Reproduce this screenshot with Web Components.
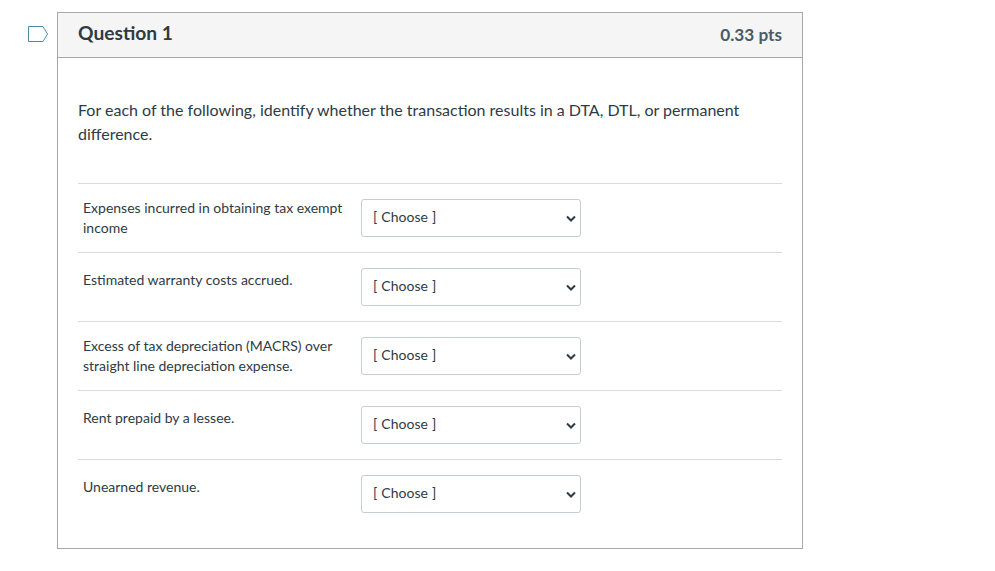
<!DOCTYPE html>
<html>
<head>
<meta charset="utf-8">
<style>
  html, body { margin: 0; background: #fff; }
  body { font-family: Lato, "Open Sans", sans-serif; color: #2d3b45; }
</style>
</head>
<body>
<quiz-question title-text="Question 1" points="0.33 pts">
  <span slot="text">For each of the following, identify whether the transaction results in a DTA, DTL, or permanent difference.</span>
  <match-row two-line>Expenses incurred in obtaining tax exempt income</match-row>
  <match-row>Estimated warranty costs accrued.</match-row>
  <match-row two-line>Excess of tax depreciation (MACRS) over straight line depreciation expense.</match-row>
  <match-row>Rent prepaid by a lessee.</match-row>
  <match-row>Unearned revenue.</match-row>
</quiz-question>

<script>
class QuizQuestion extends HTMLElement {
    constructor() {
        super();
        this.attachShadow({ mode: 'open' });
        this.shadowRoot.innerHTML = `
            <style>
                :host {
                    display: flex;
                    align-items: flex-start;
                    padding: 12px 0 0 28px;
                }
                .flag { display: block; width: 20px; height: 16px; margin: 14px 9px 0 0; flex: none; }
                .card {
                    width: 746px;
                    box-sizing: border-box;
                    border: 1px solid #a8a8a8;
                }
                header {
                    display: flex;
                    justify-content: space-between;
                    align-items: center;
                    box-sizing: border-box;
                    height: 45px;
                    padding: 0 20px;
                    background: #f5f5f5;
                    border-bottom: 1px solid #a8a8a8;
                    font-weight: bold;
                }
                h2 { margin: 0 0 5px; font-size: 19.2px; font-weight: bold; line-height: 24px; }
                .pts { font-size: 17.2px; color: #4b5b66; line-height: 24px; }
                .body { padding: 40px 20px 20px; }
                .text { font-size: 16px; line-height: 24px; margin-bottom: 37px; }
            </style>
            <svg class="flag" viewBox="0 0 20 16">
                <path d="M0.5 0.5H15L19.5 8L15 15.5H0.5Z" fill="#fff" stroke="#4a8aa8" stroke-width="1"/>
            </svg>
            <div class="card">
                <header><h2></h2><span class="pts"></span></header>
                <div class="body">
                    <div class="text"><slot name="text"></slot></div>
                    <slot></slot>
                </div>
            </div>
        `;
    }

    connectedCallback() {
        this.shadowRoot.querySelector('h2').textContent = this.getAttribute('title-text');
        this.shadowRoot.querySelector('.pts').textContent = this.getAttribute('points');
    }
}

class MatchRow extends HTMLElement {
    constructor() {
        super();
        this.attachShadow({ mode: 'open' });
        this.shadowRoot.innerHTML = `
            <style>
                :host {
                    display: flex;
                    align-items: flex-start;
                    height: 69px;
                    box-sizing: border-box;
                    border-top: 1px solid #d9dcde;
                    font-size: 14px;
                    line-height: 20px;
                }
                .label { width: 283px; box-sizing: border-box; padding: 17px 15px 0 5px; flex: none; }
                :host([two-line]) .label { padding-top: 14px; }
                .select { position: relative; width: 220px; height: 38px; margin-top: 15px; }
                select {
                    display: block;
                    appearance: none;
                    width: 100%;
                    height: 100%;
                    padding: 0 24px 4px 11px;
                    box-sizing: border-box;
                    background: #fff;
                    border: 1px solid #c7cdd1;
                    border-radius: 3px;
                    font: 14px Lato, sans-serif;
                    word-spacing: 0.5px;
                    color: #2d3b45;
                }
                .arrow { position: absolute; left: 205px; top: 16px; width: 10px; height: 7px; pointer-events: none; }
            </style>
            <div class="label"><slot></slot></div>
            <div class="select">
                <select><option>[ Choose ]</option></select>
                <svg class="arrow" viewBox="0 0 10 7">
                    <path d="M1 1.5L5 5.5L9 1.5" fill="none" stroke="#2d3b45" stroke-width="2"/>
                </svg>
            </div>
        `;
    }
}

customElements.define('quiz-question', QuizQuestion);
customElements.define('match-row', MatchRow);
</script>
</body>
</html>
